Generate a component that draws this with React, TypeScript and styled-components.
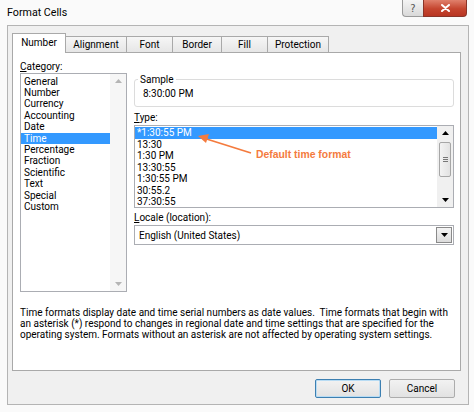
import React from 'react';
import styled, { createGlobalStyle } from 'styled-components';

const UI_FONT = 'Roboto, "Noto Sans", sans-serif';

const GlobalStyle = createGlobalStyle`
  html, body {
    margin: 0;
    padding: 0;
    background: #fafafa;
  }
  body {
    font-family: ${UI_FONT};
    font-size: 10px;
    color: #000;
  }
`;

const Page = styled.div`
  width: 474px;
  height: 412px;
  overflow: hidden;
  background: #fafafa;
`;

const TitleBar = styled.div`
  height: 25px;
  display: flex;
  align-items: flex-start;
  padding-left: 7px;
`;

const Title = styled.div`
  line-height: 25px;
  font-size: 10.7px;
  color: #000;
`;

const Caption = styled.div`
  margin-left: auto;
  margin-right: 7px;
  display: flex;
`;

const HelpButton = styled.div`
  width: 21px;
  height: 17px;
  box-sizing: border-box;
  border: 1px solid #9a9a9a;
  border-top: none;
  border-right: none;
  border-bottom-left-radius: 4px;
  background: linear-gradient(#f4f4f4, #d9d9d9);
  display: flex;
  align-items: center;
  justify-content: center;
  color: #555;
  font-size: 10px;
  font-family: "DejaVu Sans", sans-serif;
`;

const CloseButton = styled.div`
  width: 44px;
  height: 17px;
  box-sizing: border-box;
  border: 1px solid #8a3428;
  border-top: none;
  border-bottom-right-radius: 4px;
  background: linear-gradient(#e0806c, #c5452f 55%, #b83522);
  display: flex;
  align-items: center;
  justify-content: center;
`;

const Dialog = styled.div`
  width: 462px;
  height: 380px;
  box-sizing: border-box;
  margin-left: 7px;
  border: 1px solid #b4b4b4;
  background: #f0f0f0;
  padding: 7px 7px 0 4px;
  display: flex;
  flex-direction: column;
`;

const TabStrip = styled.div`
  height: 19px;
  display: flex;
  align-items: flex-end;
  position: relative;
  z-index: 1;
`;

const Tab = styled.div<{ $active?: boolean; $w: number }>`
  width: ${p => p.$w}px;
  box-sizing: border-box;
  height: ${p => (p.$active ? 20 : 16)}px;
  margin-bottom: ${p => (p.$active ? -1 : 0)}px;
  margin-left: ${p => (p.$active ? 0 : -1)}px;
  border: 1px solid #a9a9a9;
  border-bottom: none;
  background: ${p => (p.$active ? '#fff' : 'linear-gradient(#f6f6f6, #e6e6e6)')};
  display: flex;
  align-items: center;
  justify-content: center;
  padding-bottom: ${p => (p.$active ? 2 : 0)}px;
  color: #000;
  &:first-child { margin-left: 0; }
`;

const Panel = styled.div`
  height: 319px;
  box-sizing: border-box;
  border: 1px solid #a9a9a9;
  background: #fff;
  padding: 7px 7px 0 7px;
`;

const Columns = styled.div`
  display: grid;
  grid-template-columns: 107px 320px;
  column-gap: 7px;
`;

const Column = styled.div<{ $top?: number }>`
  display: flex;
  flex-direction: column;
  padding-top: ${p => p.$top || 0}px;
`;

const FieldLabel = styled.div<{ $gap?: number }>`
  line-height: 13px;
  margin-top: ${p => p.$gap || 0}px;
  color: #000;
  u { text-decoration-thickness: 1px; text-underline-offset: 1px; }
`;

const ListBox = styled.div<{ $h: number; $gap?: number }>`
  position: relative;
  height: ${p => p.$h}px;
  margin-top: ${p => p.$gap || 0}px;
  box-sizing: border-box;
  border: 1px solid #abadb3;
  background: #fff;
  display: flex;
`;

const Rows = styled.div<{ $pad: number }>`
  flex: 1;
  padding-top: ${p => p.$pad}px;
`;

const Row = styled.div<{ $selected?: boolean; $h: number; $indent: number }>`
  height: ${p => p.$h}px;
  line-height: ${p => p.$h}px;
  padding-left: ${p => p.$indent}px;
  white-space: nowrap;
  background: ${p => (p.$selected ? '#3399ff' : 'transparent')};
  color: ${p => (p.$selected ? '#fff' : '#000')};
`;

const ScrollBar = styled.div<{ $disabled?: boolean }>`
  width: 16px;
  background: ${p => (p.$disabled ? '#f6f6f6' : '#f0f0f0')};
  display: flex;
  flex-direction: column;
  align-items: center;
  justify-content: space-between;
  padding: 5px 0;
  box-sizing: border-box;
`;

const Thumb = styled.div`
  width: 12px;
  height: 35px;
  box-sizing: border-box;
  border: 1px solid #a6a6a6;
  border-radius: 2px;
  background: linear-gradient(90deg, #f3f3f3, #e2e2e2);
  display: flex;
  flex-direction: column;
  align-items: center;
  justify-content: center;
  gap: 1px;
  margin-top: -9px;
  margin-bottom: 5px;
  & > span {
    width: 5px;
    height: 1px;
    background: #777;
  }
`;

const GroupBox = styled.fieldset`
  margin: 0;
  padding: 2px 0 4px 3px;
  border: 1px solid #dcdcdc;
  border-radius: 3px;
  min-width: 0;
  height: 34px;
  box-sizing: border-box;
  legend {
    padding: 0 2px;
    line-height: 13px;
    color: #000;
  }
`;

const SampleValue = styled.div`
  line-height: 12px;
  padding-left: 5px;
`;

const ComboBox = styled.div`
  height: 20px;
  margin-top: 1px;
  box-sizing: border-box;
  border: 1px solid #abadb3;
  background: #fff;
  display: flex;
  align-items: center;
  padding-left: 4px;
  padding-right: 1px;
`;

const ComboText = styled.div`
  flex: 1;
`;

const DropButton = styled.div`
  width: 16px;
  height: 16px;
  box-sizing: border-box;
  border: 1px solid #8a8a8a;
  background: linear-gradient(#f4f4f4, #dcdcdc);
  display: flex;
  align-items: center;
  justify-content: center;
`;

const Annotation = styled.div`
  position: absolute;
  left: 121px;
  top: 23px;
  line-height: 12px;
  font-family: "Liberation Sans", Arial, sans-serif;
  font-weight: bold;
  font-size: 10.4px;
  color: #f47b3e;
  white-space: nowrap;
`;

const ArrowSvg = styled.svg`
  position: absolute;
  left: 56px;
  top: 4px;
  overflow: visible;
`;

const Description = styled.div`
  margin-top: 15px;
  line-height: 11px;
  white-space: pre;
  color: #000;
`;

const ButtonRow = styled.div`
  display: flex;
  justify-content: flex-end;
  gap: 8px;
  padding-top: 8px;
  padding-right: 6px;
`;

const Button = styled.div<{ $default?: boolean }>`
  width: 66px;
  height: 19px;
  box-sizing: border-box;
  border: 1px solid ${p => (p.$default ? '#3c7fb1' : '#acacac')};
  box-shadow: ${p => (p.$default ? 'inset 0 0 0 1px #b8dcf4' : 'none')};
  border-radius: 2px;
  background: linear-gradient(#f2f2f2, #e2e2e2);
  display: flex;
  align-items: center;
  justify-content: center;
  color: #000;
`;

const Tri: React.FC<{ up?: boolean; color?: string }> = ({ up, color = '#000' }) => (
  <svg width="7" height="4" viewBox="0 0 7 4">
    <polygon points={up ? '0,4 7,4 3.5,0' : '0,0 7,0 3.5,4'} fill={color} />
  </svg>
);

const tabs = [
  { label: 'Number', w: 54, active: true },
  { label: 'Alignment', w: 62 },
  { label: 'Font', w: 47 },
  { label: 'Border', w: 50 },
  { label: 'Fill', w: 47 },
  { label: 'Protection', w: 62 },
];

const categories = [
  'General', 'Number', 'Currency', 'Accounting', 'Date', 'Time',
  'Percentage', 'Fraction', 'Scientific', 'Text', 'Special', 'Custom',
];

const types = ['*1:30:55 PM', '13:30', '1:30 PM', '13:30:55', '1:30:55 PM', '30:55.2', '37:30:55'];

const description =
  'Time formats display date and time serial numbers as date values.  Time formats that begin with\n' +
  'an asterisk (*) respond to changes in regional date and time settings that are specified for the\n' +
  'operating system. Formats without an asterisk are not affected by operating system settings.';

export default function App() {
  return (
    <Page>
      <GlobalStyle />
      <TitleBar>
        <Title>Format Cells</Title>
        <Caption>
          <HelpButton>?</HelpButton>
          <CloseButton>
            <svg width="9" height="8" viewBox="0 0 9 8">
              <path d="M1 1 L8 7 M8 1 L1 7" stroke="#fff" strokeWidth="2" strokeLinecap="round" />
            </svg>
          </CloseButton>
        </Caption>
      </TitleBar>
      <Dialog>
        <TabStrip>
          {tabs.map(t => (
            <Tab key={t.label} $w={t.w} $active={t.active}>{t.label}</Tab>
          ))}
        </TabStrip>
        <Panel>
          <Columns>
            <Column>
              <FieldLabel><u>C</u>ategory:</FieldLabel>
              <ListBox $h={219}>
                <Rows $pad={1.5}>
                  {categories.map(c => (
                    <Row key={c} $h={11.43} $indent={3} $selected={c === 'Time'}>{c}</Row>
                  ))}
                </Rows>
                <ScrollBar $disabled>
                  <Tri up color="#b5b5b5" />
                  <Tri color="#b5b5b5" />
                </ScrollBar>
              </ListBox>
            </Column>
            <Column $top={13}>
              <GroupBox>
                <legend>Sample</legend>
                <SampleValue>8:30:00 PM</SampleValue>
              </GroupBox>
              <FieldLabel $gap={4}><u>T</u>ype:</FieldLabel>
              <ListBox $h={83} $gap={1}>
                <Rows $pad={1}>
                  {types.map((t, i) => (
                    <Row key={t} $h={11.5} $indent={2} $selected={i === 0}>{t}</Row>
                  ))}
                </Rows>
                <ScrollBar>
                  <Tri up />
                  <Thumb><span /><span /><span /></Thumb>
                  <Tri />
                </ScrollBar>
                <ArrowSvg width="66" height="30" viewBox="0 0 66 30">
                  <line x1="60" y1="23" x2="14" y2="8.5" stroke="#f47b3e" strokeWidth="1.8" />
                  <polygon points="7,6 18,4 15,13" fill="#f47b3e" />
                </ArrowSvg>
                <Annotation>Default time format</Annotation>
              </ListBox>
              <FieldLabel $gap={3}><u>L</u>ocale (location):</FieldLabel>
              <ComboBox>
                <ComboText>English (United States)</ComboText>
                <DropButton><Tri /></DropButton>
              </ComboBox>
            </Column>
          </Columns>
          <Description>{description}</Description>
        </Panel>
        <ButtonRow>
          <Button $default>OK</Button>
          <Button>Cancel</Button>
        </ButtonRow>
      </Dialog>
    </Page>
  );
}
